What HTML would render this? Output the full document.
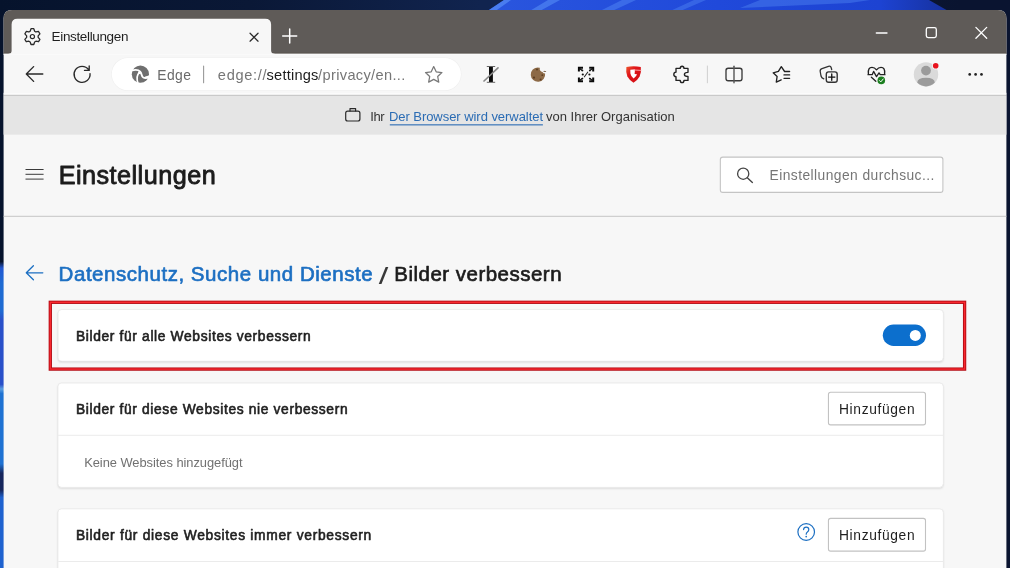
<!DOCTYPE html>
<html lang="de">
<head>
<meta charset="utf-8">
<title>Einstellungen</title>
<style>
*{box-sizing:border-box;margin:0;padding:0}
html,body{width:1010px;height:568px;overflow:hidden}
body{position:relative;background:linear-gradient(90deg,#06132c 0,#0a1836 250px,#11244f 480px,#11244f 500px,#0a1430 960px,#0a1430 1010px);font-family:"Liberation Sans",sans-serif}
svg{position:absolute;left:0;top:0;overflow:visible}
#txt{will-change:transform;opacity:.999}
</style>
</head>
<body>
<svg id="scene" width="1010" height="568" viewBox="0 0 1010 568" fill="none">
 <defs>
  <linearGradient id="wg" x1="0" x2="1" y1="0" y2="0">
   <stop offset="0" stop-color="#2a56de"/><stop offset=".5" stop-color="#2049da"/><stop offset=".85" stop-color="#1d43d2"/><stop offset="1" stop-color="#16309c"/></linearGradient>
  <linearGradient id="wl" x1="0" x2="0" y1="0" y2="1">
   <stop offset="0" stop-color="#0b1836"/><stop offset=".02" stop-color="#2358d2"/><stop offset=".07" stop-color="#1f6bd2"/><stop offset=".16" stop-color="#1f6bd2"/><stop offset=".19" stop-color="#2a50c9"/><stop offset=".40" stop-color="#2a50c9"/><stop offset=".415" stop-color="#5b9fe2"/><stop offset=".43" stop-color="#1f72d2"/><stop offset=".66" stop-color="#1f72d2"/><stop offset=".69" stop-color="#16265c"/><stop offset=".745" stop-color="#16265c"/><stop offset=".77" stop-color="#1f62cf"/><stop offset="1" stop-color="#1f62cf"/></linearGradient>
  <clipPath id="winclip"><path d="M3.6,568 V18.4 Q3.6,10 12,10 H998 Q1006.4,10 1006.4,18.4 V568 Z"/></clipPath>
  <filter id="sh" x="-5%" y="-20%" width="110%" height="150%"><feDropShadow dx="0" dy="1.1" stdDeviation="1.1" flood-color="#000" flood-opacity=".17"/></filter>
  <linearGradient id="sg" x1="0" y1="0" x2="1" y2="1"><stop offset="0" stop-color="#ee5a30"/><stop offset=".35" stop-color="#e0161a"/><stop offset="1" stop-color="#d00c12"/></linearGradient>
 </defs>
 <!-- wallpaper -->
 <polygon points="504,0 929,0 950,12 486,12" fill="url(#wg)"/>
 <g fill="#4f84f2">
  <polygon points="504,0 511,0 494,12 486,12" opacity=".85"/>
  <polygon points="548,0 560,0 538,12 528,12" opacity=".7"/>
  <polygon points="622,0 636,0 610,12 598,12" opacity=".55"/>
  <polygon points="694,0 706,0 678,12 668,12" opacity=".45"/>
  <polygon points="760,0 870,0 850,3 740,8" opacity=".45"/>
 </g>
 <rect x="0" y="262" width="6" height="306" fill="url(#wl)"/>
 <!-- window -->
 <g clip-path="url(#winclip)">
  <rect x="0" y="0" width="1010" height="568" fill="#f7f7f7"/>
  <rect x="0" y="0" width="1010" height="53.7" fill="#5f5b58"/>
  <rect x="0" y="52.6" width="1010" height="1.1" fill="#57534f"/>
  <rect x="0" y="53.7" width="1010" height="1.3" fill="#fafafa"/>
  <!-- tab -->
  <path d="M8.6,54 V53.7 Q11.6,53.7 11.6,50.7 V24.6 Q11.6,18.8 17.4,18.8 H265.2 Q271.1,18.8 271.1,24.6 V50.2 Q271.1,53.7 274.6,53.7 V54 Z" fill="#f7f7f7"/>
  <!-- toolbar bottom -->
  <rect x="0" y="92.8" width="1010" height="2" fill="#fbfbfb"/>
  <rect x="0" y="94.8" width="1010" height="1.2" fill="#c9c9c9"/>
  <rect x="0" y="96" width="1010" height="38.7" fill="#e5e5e5"/>
  <!-- address pill -->
  <rect x="111.2" y="57.4" width="350.3" height="33.5" rx="16.7" fill="#efefef"/>
  <rect x="111.8" y="58" width="349.1" height="32.3" rx="16.15" fill="#fff"/>
  <!-- header divider -->
  <rect x="0" y="215.8" width="1010" height="1" fill="#c5c5c5"/>
  <!-- search box -->
  <rect x="720.35" y="157.1" width="222.55" height="35.3" rx="2.4" fill="#fff" stroke="#c4c4c4" stroke-width="1.1"/>
  <!-- red highlight -->
  <rect x="50.3" y="302.3" width="914.3" height="66.8" stroke="#b50d15" stroke-width="3.3"/>
  <rect x="50.3" y="302.3" width="914.3" height="66.8" stroke="#f8282f" stroke-width="1.4"/>
  <!-- cards -->
  <g fill="#fff" filter="url(#sh)">
   <rect x="58.2" y="309.8" width="884.9" height="51.3" rx="3.6"/>
   <rect x="58.1" y="383.2" width="885" height="104" rx="3.6"/>
   <rect x="58.1" y="509.1" width="885" height="104.3" rx="3.6"/>
  </g>
  <g stroke="#e9e9e9" stroke-width=".8">
   <rect x="57.9" y="309.5" width="885.5" height="51.8" rx="3.9"/>
   <rect x="57.8" y="382.9" width="885.6" height="104.5" rx="3.9"/>
   <rect x="57.8" y="508.8" width="885.6" height="104.8" rx="3.9"/>
  </g>
  <rect x="58.1" y="434.8" width="885" height="1" fill="#ebebeb"/>
  <rect x="58.1" y="561" width="885" height="1" fill="#ebebeb"/>
  <!-- buttons -->
  <rect x="828.45" y="392.2" width="97.05" height="32.7" rx="2.2" fill="#fff" stroke="#c2c2c2" stroke-width="1.1"/>
  <rect x="828.45" y="518.4" width="97.05" height="32.7" rx="2.2" fill="#fff" stroke="#c2c2c2" stroke-width="1.1"/>
  <!-- toggle -->
  <rect x="882.8" y="324.6" width="43.2" height="21.4" rx="10.7" fill="#0c6fcd"/>
  <circle cx="915.3" cy="335.4" r="5.5" fill="#fff"/>
  <!-- link underline -->
  <rect x="389.8" y="124.3" width="153.1" height="1.1" fill="#2b6cb4"/>
 </g>
 <g stroke-linecap="round" stroke-linejoin="round">
<path d="M34.65,31.25 L33.78,28.72 L31.02,28.72 L30.15,31.25 L28.89,31.98 L26.26,31.47 L24.89,33.85 L26.65,35.87 L26.65,37.33 L24.89,39.35 L26.26,41.73 L28.89,41.22 L30.15,41.95 L31.02,44.48 L33.78,44.48 L34.65,41.95 L35.91,41.22 L38.54,41.73 L39.91,39.35 L38.15,37.33 L38.15,35.87 L39.91,33.85 L38.54,31.47 L35.91,31.98Z" stroke="#2a2a2a" stroke-width="1.3"/>
<circle cx="32.4" cy="36.6" r="2.1" stroke="#2a2a2a" stroke-width="1.2"/>
<path d="M250.05,33.2 L258.05,41.2 M258.05,33.2 L250.05,41.2" stroke="#2a2a2a" stroke-width="1.25"/>
<path d="M282.7,36.1 H296.7 M289.7,29.1 V43.1" stroke="#fff" stroke-width="1.5"/>
<path d="M876.3,33 H887" stroke="#fff" stroke-width="1.3"/>
<rect x="926.3" y="27.6" width="10" height="10" rx="1.8" stroke="#fff" stroke-width="1.3"/>
<path d="M975.9,27.4 L986.7,38.2 M986.7,27.4 L975.9,38.2" stroke="#fff" stroke-width="1.3"/>
<path d="M26.4,74 H42.8 M33.6,66.6 L26.3,74 L33.6,81.4" stroke="#2a2a2a" stroke-width="1.35"/>
<path d="M90.04,73.6 A8 8 0 1 1 88.62,69.71 M89.2,65.9 V70.4 H84.5" stroke="#2a2a2a" stroke-width="1.35"/>
<circle cx="140.4" cy="74.2" r="8.6" fill="#6f6f6f"/>
<path d="M131.5,70.5 C134.5,69.7 138.6,69.8 140.2,71.6 C142.1,73.8 141.2,76.3 143.3,77.5 C145,78.4 147.3,78 149.4,76.9" stroke="#fff" stroke-width="1.9"/>
<path d="M139.4,72.4 C137.2,74.6 136.6,79 137.9,83.2" stroke="#fff" stroke-width="1.6"/>
<path d="M149.6,75.2 L144.6,76.8 L149.6,79.6 Z" fill="#fff"/>
<circle cx="139.6" cy="72.6" r="1.5" fill="#fff"/>
<path d="M433.70,66.60 L431.23,71.80 L425.52,72.54 L429.71,76.50 L428.65,82.16 L433.70,79.40 L438.75,82.16 L437.69,76.50 L441.88,72.54 L436.17,71.80Z" stroke="#787878" stroke-width="1.25"/>
<path d="M203.6,66 V82.8" stroke="#9a9a9a" stroke-width="1.1"/>
<rect x="489" y="66.8" width="3.9" height="15.2" fill="#0a0a0a"/>
<path d="M487.2,66.5 H494.8 M487.2,82.3 H494.8" stroke="#555" stroke-width="0.9"/>
<path d="M484,81 L498,67.9" stroke="#888" stroke-width="1.7"/>
<path d="M538,67.4 a7.2 7.2 0 1 0 7.1 6.2 a3 3 0 0 1 -2.6 -1.5 a3.2 3.2 0 0 1 -2.6 -4.3 a7 7 0 0 0 -1.9 -0.4z" fill="#8d6a47"/>
<g fill="#5e3f22"><circle cx="537" cy="69.5" r="1"/><circle cx="534" cy="77.6" r="1.1"/><circle cx="540.6" cy="79.4" r="1"/><circle cx="542.3" cy="75.2" r=".9"/><circle cx="544.2" cy="71.4" r=".6"/><circle cx="545.6" cy="71.6" r=".5"/></g>
<path d="M578.9,71.6 V67.8 H583 M589.2,67.8 H593.2 V71.6 M593.2,77.4 V81.2 H589.2 M583,81.2 H578.9 V77.4" stroke="#0a0a0a" stroke-width="2" stroke-linecap="butt" stroke-linejoin="miter"/>
<path d="M584.4,76.8 L587.7,72.2" stroke="#222" stroke-width="1.1"/>
<path d="M579.6,68.5 L582.2,70.6 M592.5,68.5 L589.9,70.6 M579.6,80.5 L582.2,78.4 M592.5,80.5 L589.9,78.4" stroke="#111" stroke-width="1.3"/>
<g fill="#111"><circle cx="582.8" cy="74.5" r="1.1"/><circle cx="589.4" cy="74.5" r="1.1"/><circle cx="582.4" cy="70.4" r=".9"/><circle cx="589.8" cy="70.4" r=".9"/><circle cx="582.4" cy="78.6" r=".9"/><circle cx="589.8" cy="78.6" r=".9"/></g>
<path d="M626.4,66.9 Q633.5,65.4 640.8,66.9 Q641.6,72.5 639.6,76.6 Q637.6,80.3 633.5,82.8 Q629.4,80.3 627.4,76.6 Q625.6,72.5 626.4,66.9Z" fill="url(#sg)"/>
<path d="M630.3,69.8 Q632.6,69.2 635,69.6 L634.6,74 L637,74.2 Q636.4,76.6 633.6,78.4 Q630.9,76.6 630.4,73.5Z" fill="#fff"/>
<path d="M634,70 L641,70.4" stroke="#ffb0b0" stroke-width="0.9"/>
<path d="M676,68.4 H680.2 Q680.3,66.2 682.1,66.2 Q683.9,66.2 684,68.4 H688 V72.3 Q684.4,72.3 684.4,74.4 Q684.4,76.5 688,76.5 V80.4 H684 Q683.9,82.6 682.1,82.6 Q680.3,82.6 680.2,80.4 H676 V76.6 Q673.8,76.5 673.8,74.4 Q673.8,72.3 676,72.2Z" stroke="#222" stroke-width="1.35"/>
<path d="M707.4,66 V82.8" stroke="#cfcfcf" stroke-width="1"/>
<rect x="726" y="68.2" width="16" height="12.6" rx="2.2" stroke="#3a3a3a" stroke-width="1.35"/>
<path d="M734,66.3 V82.7" stroke="#555" stroke-width="1.4"/>
<path d="M784.6,71.5 L781.3,66.7 L778.4,71.4 L773.2,72.8 L777.1,76.5 L776.3,82.1 L781.2,79.9 M784.6,71.5 H789.6 M784,74.9 H789.6 M784,78.3 H789.6" stroke="#222" stroke-width="1.35"/>
<path d="M823.8,78.8 Q821.5,78 821,76 L820.2,71.5 Q819.9,69.3 822,68.6 L828.5,66.3 Q830.8,65.8 831.3,68 L831.7,69.6" stroke="#333" stroke-width="1.3"/>
<rect x="826.3" y="71.9" width="10.9" height="10.3" rx="2.3" stroke="#333" stroke-width="1.4"/>
<path d="M828.6,77.1 H834.9 M831.75,73.9 V80.3" stroke="#111" stroke-width="1.3"/>
<path d="M868.4,73.6 Q867.8,67.4 872,67.4 Q874.6,67.4 876.5,69.8 Q878.4,67.4 881,67.4 Q885.2,67.4 884.6,73.6" stroke="#222" stroke-width="1.35"/>
<path d="M868,74.7 H872.2 L873.6,71.4 L876.5,76.6 L879,72.9 L880.2,74.7 H885" stroke="#222" stroke-width="1.3"/>
<path d="M871.4,77.3 L875.8,81.2" stroke="#222" stroke-width="1.35"/>
<circle cx="881.3" cy="80.4" r="3.8" fill="#1b7f1f"/>
<path d="M879.5,80.6 L880.8,81.9 L883.2,79" stroke="#fff" stroke-width="1"/>
<circle cx="926" cy="74.4" r="12.2" fill="#dadada"/>
<circle cx="926" cy="70.6" r="4.9" fill="#9b9b9b"/>
<path d="M917.2,82.6 Q917.4,77.8 926,77.8 Q934.6,77.8 934.8,82.6 Q931,86.4 926,86.4 Q921,86.4 917.2,82.6Z" fill="#9b9b9b"/>
<circle cx="935.7" cy="65.8" r="3.6" fill="#f7f7f7"/>
<circle cx="935.7" cy="65.8" r="2.8" fill="#e8131d"/>
<g fill="#222"><circle cx="969.7" cy="74.4" r="1.35"/><circle cx="975.6" cy="74.4" r="1.35"/><circle cx="981.5" cy="74.4" r="1.35"/></g>
<rect x="345.7" y="111.2" width="14.2" height="9.8" rx="2" stroke="#2a2a2a" stroke-width="1.2"/>
<path d="M350,111 V108.6 H355.6 V111" stroke="#2a2a2a" stroke-width="1.2"/>
<path d="M25.9,169.5 H43.2 M25.9,174.3 H43.2 M25.9,179.1 H43.2" stroke="#3a3a3a" stroke-width="1"/>
<circle cx="743.2" cy="173.7" r="5.6" stroke="#444" stroke-width="1.3"/>
<path d="M747.3,177.8 L752.4,182.4" stroke="#444" stroke-width="1.4"/>
<path d="M26.4,272.8 H42.8 M33.4,265.8 L26.3,272.8 L33.4,279.8" stroke="#1c6fc2" stroke-width="1.3"/>
<circle cx="806.2" cy="532" r="8.3" stroke="#1c6fc2" stroke-width="1.2"/>
<path d="M803.6,529.6 Q803.7,527.2 806.2,527.2 Q808.8,527.2 808.8,529.5 Q808.8,531 807.4,531.9 Q806.2,532.7 806.2,534.2" stroke="#1c6fc2" stroke-width="1.2"/>
<circle cx="806.2" cy="536.6" r=".85" fill="#1c6fc2"/>
 </g>
</svg>
<svg id="txt" width="1010" height="568" viewBox="0 0 1010 568" font-family="Liberation Sans, sans-serif">
<text id="t_tab" x="51.60" y="41" font-size="13.5" fill="#1f1f1f" textLength="76.83" lengthAdjust="spacing" >Einstellungen</text>
<text id="t_edge" x="157.29" y="80" font-size="13.9" fill="#6a6a6a" textLength="33.57" lengthAdjust="spacing" >Edge</text>
<text id="t_url1" x="217.81" y="80" font-size="14.6" fill="#767676" textLength="48.84" lengthAdjust="spacing" >edge://</text>
<text id="t_url2" x="266.57" y="80" font-size="14.6" fill="#1b1b1b" textLength="51.78" lengthAdjust="spacing" >settings</text>
<text id="t_url3" x="318.08" y="80" font-size="14.6" fill="#767676" textLength="87.23" lengthAdjust="spacing" >/privacy/en...</text>
<text id="t_inf1" x="370.15" y="121" font-size="13.0" fill="#333333" textLength="14.47" lengthAdjust="spacing" >Ihr</text>
<text id="t_inf2" x="388.89" y="121" font-size="13.0" fill="#2b6cb4" textLength="154.13" lengthAdjust="spacing" >Der Browser wird verwaltet</text>
<text id="t_inf3" x="545.96" y="121" font-size="13.0" fill="#333333" textLength="128.85" lengthAdjust="spacing" >von Ihrer Organisation</text>
<text id="t_h1" x="58.64" y="184" font-size="25.2" fill="#1b1b1b" textLength="157.04" lengthAdjust="spacing" stroke="#1b1b1b" stroke-width="0.85" stroke-linejoin="round" paint-order="stroke">Einstellungen</text>
<text id="t_srch" x="769.60" y="180" font-size="13.8" fill="#767676" textLength="164.72" lengthAdjust="spacing" >Einstellungen durchsuc...</text>
<text id="t_bc1" x="58.61" y="281" font-size="20.5" fill="#1c6fc2" textLength="314.01" lengthAdjust="spacing" stroke="#1c6fc2" stroke-width="0.65" stroke-linejoin="round" paint-order="stroke">Datenschutz, Suche und Dienste</text>
<text id="t_bc2" x="378.74" y="284" font-size="24.5" fill="#383838" textLength="9.56" lengthAdjust="spacingAndGlyphs" >/</text>
<text id="t_bc3" x="394.27" y="281" font-size="20.5" fill="#1b1b1b" textLength="167.29" lengthAdjust="spacing" stroke="#1b1b1b" stroke-width="0.65" stroke-linejoin="round" paint-order="stroke">Bilder verbessern</text>
<text id="t_c1" x="75.94" y="341" font-size="13.8" fill="#1f1f1f" textLength="234.85" lengthAdjust="spacing" stroke="#1f1f1f" stroke-width="0.6" stroke-linejoin="round" paint-order="stroke">Bilder für alle Websites verbessern</text>
<text id="t_c2" x="75.94" y="414" font-size="13.8" fill="#1f1f1f" textLength="271.67" lengthAdjust="spacing" stroke="#1f1f1f" stroke-width="0.6" stroke-linejoin="round" paint-order="stroke">Bilder für diese Websites nie verbessern</text>
<text id="t_none" x="84.16" y="467" font-size="12.9" fill="#717171" textLength="158.40" lengthAdjust="spacing" >Keine Websites hinzugefügt</text>
<text id="t_b1" x="838.99" y="414" font-size="13.8" fill="#1f1f1f" textLength="75.63" lengthAdjust="spacing" >Hinzufügen</text>
<text id="t_c3" x="75.94" y="540" font-size="13.8" fill="#1f1f1f" textLength="295.34" lengthAdjust="spacing" stroke="#1f1f1f" stroke-width="0.6" stroke-linejoin="round" paint-order="stroke">Bilder für diese Websites immer verbessern</text>
<text id="t_b2" x="838.99" y="540" font-size="13.8" fill="#1f1f1f" textLength="75.63" lengthAdjust="spacing" >Hinzufügen</text>
</svg>
</body>
</html>
